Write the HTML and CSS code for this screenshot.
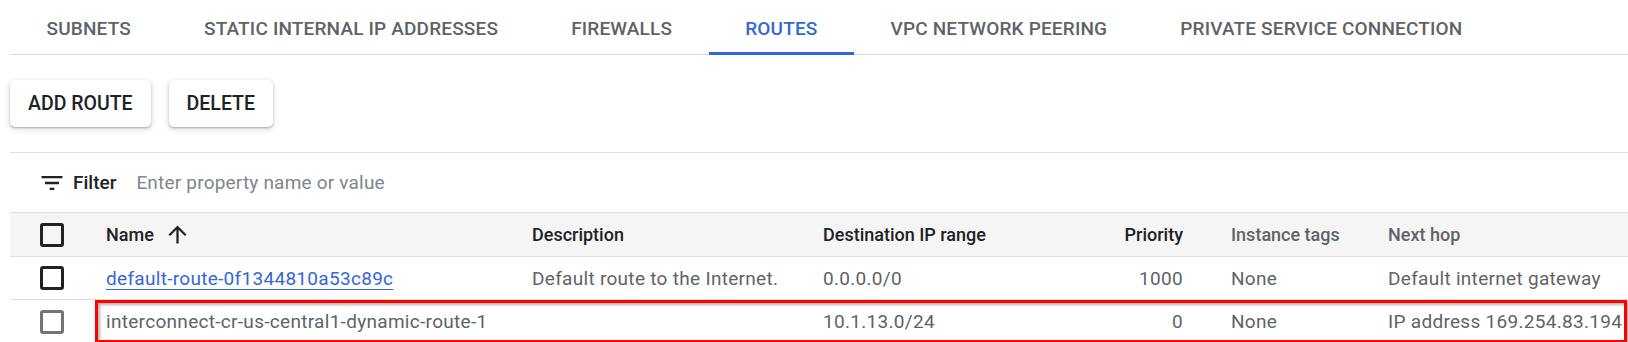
FILE: index.html
```html
<!DOCTYPE html>
<html>
<head>
<meta charset="utf-8">
<link rel="stylesheet" href="styles.css">
</head>
<body>
<div class="page">
  <nav class="tabs">
    <div class="tab">Subnets</div>
    <div class="tab">Static internal IP addresses</div>
    <div class="tab">Firewalls</div>
    <div class="tab active">Routes</div>
    <div class="tab">VPC network peering</div>
    <div class="tab">Private service connection</div>
  </nav>

  <div class="actions">
    <button class="btn">Add route</button>
    <button class="btn">Delete</button>
  </div>

  <div class="filter">
    <svg class="filter-icon" viewBox="0 0 24 24" width="28" height="28"><path d="M10 18h4v-2h-4v2zM3 6v2h18V6H3zm3 7h12v-2H6v2z" fill="#202124"/></svg>
    <span class="filter-label">Filter</span>
    <span class="filter-ph">Enter property name or value</span>
  </div>

  <div class="table">
    <div class="row head">
      <div class="cell cb"><span class="box"></span></div>
      <div class="cell">Name <svg class="arrow" viewBox="0 0 24 24" width="27" height="27"><path d="M4 12l1.41 1.41L11 7.83V20h2V7.83l5.58 5.59L20 12l-8-8-8 8z" fill="#202124"/></svg></div>
      <div class="cell">Description</div>
      <div class="cell">Destination IP range</div>
      <div class="cell num">Priority</div>
      <div class="cell tags muted">Instance tags</div>
      <div class="cell muted">Next hop</div>
    </div>
    <div class="row">
      <div class="cell cb"><span class="box"></span></div>
      <div class="cell"><a class="link" href="#">default-route-0f1344810a53c89c</a></div>
      <div class="cell">Default route to the Internet.</div>
      <div class="cell">0.0.0.0/0</div>
      <div class="cell num">1000</div>
      <div class="cell tags">None</div>
      <div class="cell">Default internet gateway</div>
    </div>
    <div class="row marked">
      <div class="cell cb"><span class="box dim"></span></div>
      <div class="cell">interconnect-cr-us-central1-dynamic-route-1</div>
      <div class="cell"></div>
      <div class="cell">10.1.13.0/24</div>
      <div class="cell num">0</div>
      <div class="cell tags">None</div>
      <div class="cell">IP address 169.254.83.194</div>
    </div>
  </div>
</div>
</body>
</html>
```

FILE: styles.css
```css
* { box-sizing: border-box; }
html, body { margin: 0; padding: 0; background: #fff; }
body {
  font-family: Roboto, "Liberation Sans", Arial, sans-serif;
  color: #202124;
  overflow: hidden;
}
.page { padding-left: 10px; }

.tabs {
  display: flex;
  height: 55px;
  border-bottom: 1px solid #dadce0;
}
.tab {
  padding: 0 36.5px;
  height: 54px;
  display: flex;
  align-items: center;
  padding-top: 2px;
  font-size: 19px;
  letter-spacing: 0.17px;
  font-weight: 500;
  text-transform: uppercase;
  color: #5f6368;
  white-space: nowrap;
}
.tab.active {
  color: #3367d6;
  height: 55px;
  margin-bottom: -1px;
  border-bottom: 3px solid #3367d6;
  padding-top: 5px;
}

.actions {
  display: flex;
  gap: 18px;
  margin-top: 25px;
}
.btn {
  height: 47px;
  padding: 0 18px;
  border: none;
  border-radius: 5px;
  background: #fff;
  font-family: inherit;
  font-size: 19.5px;
  font-weight: 500;
  text-transform: uppercase;
  color: #202124;
  box-shadow: 0 1px 2px rgba(60,64,67,.35), 0 2px 5px 1px rgba(60,64,67,.15);
}

.filter {
  margin-top: 25px;
  border-top: 1px solid #e0e0e0;
  height: 60px;
  display: flex;
  align-items: center;
  padding-left: 28px;
}
.filter-icon { flex: none; }
.filter-label {
  margin-left: 7px;
  font-size: 19px;
  font-weight: 500;
  color: #202124;
}
.filter-ph {
  margin-left: 20px;
  font-size: 19px;
  letter-spacing: 0.2px;
  color: #80868b;
}

.table { border-top: 1px solid #e0e0e0; }
.row {
  display: grid;
  grid-template-columns: 96px 426px 291px 277px 83px 205px 1fr;
  height: 43px;
  border-bottom: 1px solid #e0e0e0;
  font-size: 19px;
  letter-spacing: 0.3px;
  color: #5f6368;
  position: relative;
}
.row.head {
  height: 44px;
  background: #f5f5f5;
  font-size: 18px;
  letter-spacing: 0;
  font-weight: 500;
  color: #202124;
}
.row.marked { border-bottom: none; }
.cell {
  display: flex;
  align-items: center;
  white-space: nowrap;
}
.cell.cb { padding-left: 30px; }
.cell.num { justify-content: flex-end; }
.cell.tags { padding-left: 48px; }
.head .muted { color: #5f6368; }
.arrow { margin-left: 10px; }

.box {
  width: 24px;
  height: 24px;
  border: 3px solid #202124;
  border-radius: 3px;
}
.box.dim { border-color: #757575; }

.link {
  color: #3367d6;
  text-decoration: underline;
  text-underline-offset: 4px;
  text-decoration-thickness: 1px;
}

.row.marked::after {
  content: "";
  position: absolute;
  left: 85px;
  right: 1px;
  top: 0;
  height: 37px;
  border: 3px solid #f00;
  box-shadow: 2px 2px 3px rgba(0,0,0,.35), inset 2px 2px 3px rgba(0,0,0,.3);
  pointer-events: none;
}
```
